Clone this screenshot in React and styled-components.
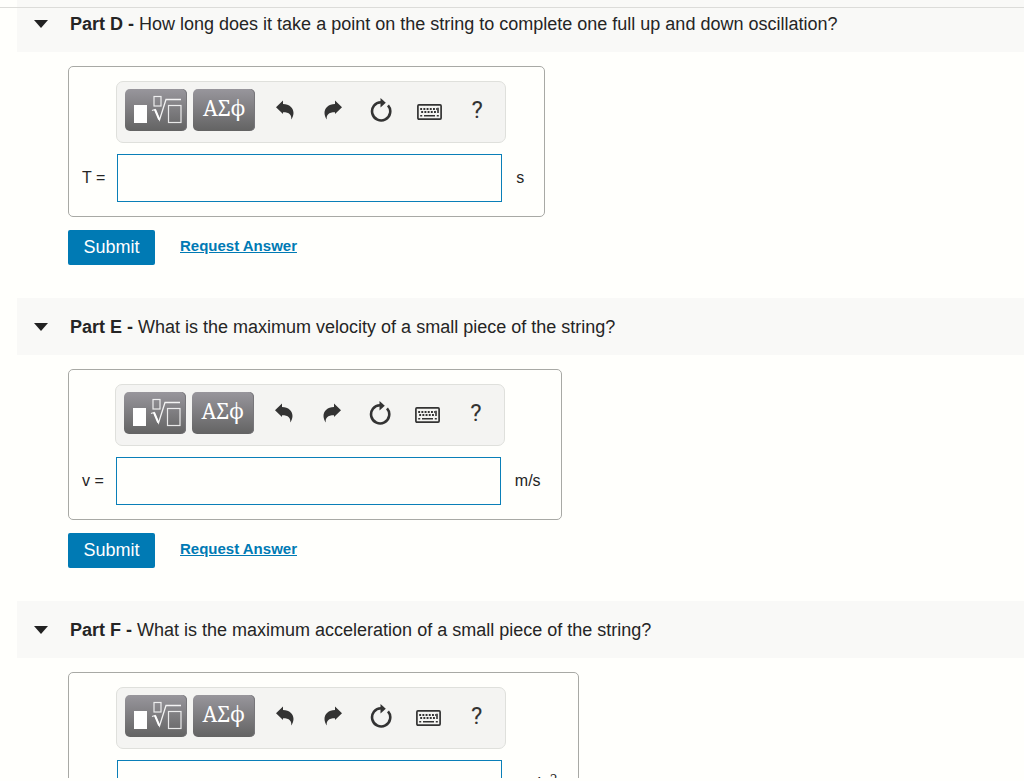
import styled, { createGlobalStyle } from 'styled-components';

const parts = [
  { id: 'D', question: 'How long does it take a point on the string to complete one full up and down oscillation?', symbol: 'T', unit: 's' },
  { id: 'E', question: 'What is the maximum velocity of a small piece of the string?', symbol: 'v', unit: 'm/s' },
  { id: 'F', question: 'What is the maximum acceleration of a small piece of the string?', symbol: 'a', unit: 'm/s', power: '2' },
];

function TemplatesIcon() {
  return (
    <svg width="62" height="42" viewBox="0 0 62 42" fill="none" stroke="#fff" aria-hidden="true">
      <rect x="9" y="16" width="13" height="18" fill="#fff" stroke="none" />
      <rect x="29" y="7.5" width="7" height="9.5" strokeWidth="1.2" strokeOpacity=".85" />
      <path d="M27 21.500l3-1 4.500 10.500L41 10.500h15" strokeWidth="1.3" strokeOpacity=".9" />
      <path d="M30 20.500l4.200 10" strokeWidth="2" />
      <rect x="43.500" y="16.500" width="12.500" height="17" strokeWidth="1.200" strokeOpacity=".85" />
    </svg>
  );
}

function UndoIcon() {
  return (
    <svg width="18" height="20" viewBox="0 0 18 20" fill="#333" aria-hidden="true">
      <path d="M0 7.200 7 .5v3.400c6.500.2 10.500 4 10.500 9 0 2-.8 4.500-2.300 6.600.6-4.500-1.700-7.200-8.200-7.200V14z" />
    </svg>
  );
}

function RedoIcon() {
  return (
    <svg width="18" height="20" viewBox="0 0 18 20" fill="#333" aria-hidden="true">
      <path d="M18 7.200 11 .5v3.400C4.500 4.100.5 7.900.5 12.900c0 2 .8 4.500 2.300 6.600-.6-4.500 1.700-7.200 8.200-7.200V14z" />
    </svg>
  );
}

function ResetIcon() {
  return (
    <svg width="22" height="24" viewBox="0 0 22 24" fill="none" aria-hidden="true">
      <path d="M11 4.200A9.100 9.100 0 1 0 18 7.300" stroke="#333" strokeWidth="2.600" />
      <path d="M10.500 0l5.300 4.700-5.300 4.700z" fill="#333" />
    </svg>
  );
}

function KeyboardIcon() {
  return (
    <svg width="25" height="20" viewBox="0 0 25 20" fill="none" stroke="#333" aria-hidden="true">
      <rect x="0.900" y="4.900" width="23.200" height="14.200" rx="1" strokeWidth="1.700" />
      <path d="M3.200 9h17M4.200 12h16" strokeWidth="1.800" strokeDasharray="1.900 1.300" />
      <path d="M3.200 15.700h2M7 15.700h11M19.800 15.700h2M21 7.800v5.200" strokeWidth="1.600" />
    </svg>
  );
}

function Part({ part }) {
  const inputId = `answer-${part.id}`;
  return (
    <section>
      <PartHeader>
        <Toggle type="button" aria-label={`Collapse Part ${part.id}`} aria-expanded="true">
          <svg width="14" height="8" viewBox="0 0 14 8" fill="#222" aria-hidden="true">
            <path d="M0 0h14L7 8z" />
          </svg>
        </Toggle>
        <Title>
          <b>Part {part.id} - </b>
          {part.question}
        </Title>
      </PartHeader>
      <PartBody>
        <AnswerBox>
          <Label htmlFor={inputId}>{part.symbol} =</Label>
          <Editor>
            <Toolbar>
              <Tile type="button" aria-label="Templates"><TemplatesIcon /></Tile>
              <Tile type="button">ΑΣϕ</Tile>
              <Tools>
                <Tool type="button" aria-label="Undo"><UndoIcon /></Tool>
                <Tool type="button" aria-label="Redo"><RedoIcon /></Tool>
                <Tool type="button" aria-label="Reset"><ResetIcon /></Tool>
                <Tool type="button" aria-label="Keyboard shortcuts"><KeyboardIcon /></Tool>
                <Tool type="button">?</Tool>
              </Tools>
            </Toolbar>
            <AnswerInput id={inputId} type="text" />
          </Editor>
          <Unit $math={Boolean(part.power)}>
            {part.unit}
            {part.power && <sup>{part.power}</sup>}
          </Unit>
        </AnswerBox>
        <Actions>
          <Submit type="button">Submit</Submit>
          <RequestLink href="#request">Request Answer</RequestLink>
        </Actions>
      </PartBody>
    </section>
  );
}

export default function App() {
  return (
    <Page>
      <GlobalStyle />
      <TopLine />
      <Scroller>
        <PartList>
          {parts.map((part) => <Part key={part.id} part={part} />)}
        </PartList>
      </Scroller>
    </Page>
  );
}

const GlobalStyle = createGlobalStyle`
  * {
    box-sizing: border-box;
  }

  body {
    margin: 0;
    background: #fffffc;
    color: #252525;
    font-family: "Liberation Sans", Arial, sans-serif;
    font-size: 16px;
  }

  button, input {
    font-family: inherit;
  }
`;
const Page = styled.main`
  position: relative;
  height: 100vh;
  padding-bottom: 3px;
`;
const TopLine = styled.div`
  position: absolute;
  top: 7px;
  left: 0;
  right: 0;
  height: 1px;
  background: #dcdcd9;
`;
const Scroller = styled.div`
  height: 100%;
  overflow: hidden;
`;
const PartList = styled.div`
  display: flex;
  flex-direction: column;
  gap: 33px;
  margin-top: -5px;
  padding-left: 17px;
`;
const PartHeader = styled.header`
  display: flex;
  align-items: center;
  height: 57px;
  background: #f9f9f7;
`;
const Toggle = styled.button`
  display: flex;
  justify-content: center;
  width: 48px;
  padding: 8px 0;
  border: none;
  background: none;
`;
const Title = styled.h2`
  margin: 0 0 0 5px;
  font-size: 18px;
  font-weight: 400;
  line-height: 24px;
`;
const PartBody = styled.div`
  display: flex;
  flex-direction: column;
  align-items: flex-start;
  gap: 13px;
  padding: 14px 0 0 51px;
`;
const AnswerBox = styled.div`
  display: flex;
  align-items: flex-end;
  padding: 14px 20px 14px 13px;
  border: 1px solid #a8a9a5;
  border-radius: 5px;
`;
const Label = styled.label`
  margin-right: 11px;
  line-height: 48px;
`;
const Editor = styled.div`
  display: flex;
  flex-direction: column;
  gap: 11px;
`;
const Toolbar = styled.div`
  display: flex;
  gap: 6px;
  padding: 7px 4px 7px 8px;
  height: 62px;
  border: 1px solid #dfe0dc;
  border-radius: 7px;
  background: #f4f4f2;
`;
const Tile = styled.button`
  display: flex;
  align-items: center;
  justify-content: center;
  width: 62px;
  height: 42px;
  padding: 0 0 4px;
  border: none;
  border-radius: 5px;
  background: linear-gradient(#98969c, #636363);
  box-shadow: inset -1px 0 0 #77767a;
  color: #fff;
  font-family: "Noto Serif", "DejaVu Serif", serif;
  font-size: 21px;

  svg {
    margin-top: 4px;
  }
`;
const Tools = styled.div`
  display: flex;
`;
const Tool = styled.button`
  display: flex;
  align-items: center;
  justify-content: center;
  width: 48px;
  height: 42px;
  padding: 0;
  border: none;
  background: none;
  color: #333;
  font-family: Roboto, sans-serif;
  font-size: 24px;
`;
const AnswerInput = styled.input`
  width: 385px;
  height: 48px;
  margin-left: 1px;
  padding: 0 10px;
  border: 1px solid #0a7fb8;
  border-radius: 0;
  background: #fffffc;
  font-size: 16px;
`;
const Unit = styled.span`
  margin-left: 10px;
  font-family: ${({ $math }) => ($math ? '"DejaVu Serif", serif' : 'inherit')};
  font-size: ${({ $math }) => ($math ? '19px' : '16px')};
  line-height: 48px;

  sup {
    font-size: 12px;
    line-height: 0;
  }
`;
const Actions = styled.div`
  display: flex;
  gap: 25px;
`;
const Submit = styled.button`
  width: 87px;
  height: 35px;
  padding: 0;
  border: none;
  border-radius: 2px;
  background: #007ab4;
  color: #fff;
  font-size: 18px;
`;
const RequestLink = styled.a`
  color: #007ab4;
  font-size: 15px;
  font-weight: 700;
  line-height: 32px;
`;
